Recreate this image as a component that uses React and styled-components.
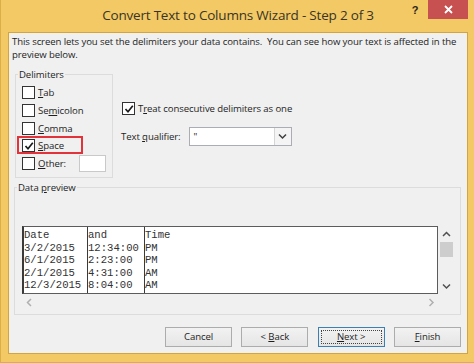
import styled, { createGlobalStyle } from "styled-components";

const GlobalStyle = createGlobalStyle`
  html, body { margin: 0; padding: 0; }
  body {
    width: 474px;
    height: 363px;
    overflow: hidden;
    font-family: "Open Sans", "Noto Sans", sans-serif;
    color: #1e1e1e;
  }
`;

const Frame = styled.div`
  box-sizing: border-box;
  width: 474px;
  height: 363px;
  background: #f2c964;
  border-left: 1px solid #dcad48;
  border-bottom: 1px solid #dcad48;
  padding: 0 6px 8px 7px;
  display: flex;
  flex-direction: column;
`;

const TitleBar = styled.div`
  height: 32px;
  flex: none;
  display: grid;
  grid-template-columns: 1fr auto 1fr;
  align-items: start;
`;

const Title = styled.div`
  grid-column: 2;
  font-size: 13.5px;
  letter-spacing: -0.2px;
  line-height: 31px;
  color: #3b3424;
  white-space: nowrap;
`;

const Controls = styled.div`
  grid-column: 3;
  justify-self: end;
  display: flex;
  align-items: flex-start;
`;

const HelpButton = styled.div`
  width: 14px;
  height: 20px;
  margin-right: 6px;
  display: flex;
  align-items: center;
  justify-content: center;
  font: bold 11px "Liberation Sans", sans-serif;
  color: #2b2618;
`;

const CloseButton = styled.div`
  width: 40px;
  height: 19px;
  background: #c75050;
  display: flex;
  align-items: center;
  justify-content: center;
`;

const Client = styled.div`
  flex: 1;
  background: #f0f0f0;
  border: 1px solid #d4a43e;
  padding: 2px 6px 0 3px;
  display: flex;
  flex-direction: column;
  font-size: 9.6px;
  letter-spacing: -0.1px;
`;

const Intro = styled.p`
  margin: 0;
  line-height: 13px;
  width: 445px;
`;

const TopRow = styled.div`
  display: flex;
  align-items: flex-start;
  margin: 7px 0 0 3px;
`;

const Group = styled.fieldset`
  margin: 0;
  box-sizing: border-box;
  border: 1px solid #dcdcdc;
  min-inline-size: 0;
  padding: ${(p) => p.$pad};
`;

const Legend = styled.legend`
  padding: 0 1px;
  margin-left: ${(p) => p.$shift}px;
  line-height: 13px;
`;

const Delimiters = styled(Group)`
  width: 98px;
  flex: none;
`;

const CheckRow = styled.div`
  position: relative;
  display: flex;
  align-items: center;
  gap: 3px;
  height: ${(p) => p.$h || 17.7}px;
`;

const Box = styled.span`
  box-sizing: border-box;
  width: 13px;
  height: 13px;
  flex: none;
  border: 1px solid #333;
  background: #fff;
  display: flex;
  align-items: center;
  justify-content: center;
`;

const Highlight = styled.span`
  position: absolute;
  left: -5px;
  top: -1px;
  width: 66px;
  height: 18px;
  box-sizing: border-box;
  border: 2px solid #e2333a;
`;

const Key = styled.span`
  text-decoration: underline;
  text-underline-offset: 1px;
`;

const SmallInput = styled.span`
  box-sizing: border-box;
  width: 28px;
  height: 17px;
  margin-left: 10px;
  background: #fff;
  border: 1px solid #c9c9c9;
`;

const Options = styled.div`
  margin-left: 9px;
  padding-top: 32px;
  display: flex;
  flex-direction: column;
  gap: 10px;
`;

const QualifierRow = styled.div`
  display: flex;
  align-items: center;
  gap: 8px;
  margin-left: -1px;
`;

const Combo = styled.div`
  box-sizing: border-box;
  width: 103px;
  height: 19px;
  background: #fff;
  border: 1px solid #abadb3;
  display: flex;
`;

const ComboValue = styled.span`
  flex: 1;
  padding: 1px 0 0 4px;
  line-height: 16px;
`;

const DropButton = styled.span`
  width: 16px;
  border-left: 1px solid #d5d5d5;
  background: #f4f4f4;
  display: flex;
  align-items: center;
  justify-content: center;
`;

const PreviewGroup = styled(Group)`
  margin: 3px 0 0 2px;
`;

const PreviewGap = styled.div`
  height: 32px;
`;

const Preview = styled.div`
  display: grid;
  grid-template-columns: 416px 17px;
  grid-template-rows: 68px 17px;
`;

const Sheet = styled.div`
  box-sizing: border-box;
  border: 1px solid #5c5c5c;
  border-left: 2px solid #3a3a3a;
  background: #fff;
  overflow: hidden;
  display: flex;
  font-family: "Liberation Mono", monospace;
  font-size: 10.6px;
  letter-spacing: 0;
  line-height: 12.5px;
  color: #333;
`;

const Column = styled.div`
  flex: ${(p) => (p.$w ? `0 0 ${p.$w}px` : "1")};
  box-sizing: border-box;
  padding-top: 2px;
  white-space: pre;
  border-left: ${(p) => (p.$first ? "none" : "1px solid #3a3a3a")};
`;

const VScroll = styled.div`
  display: flex;
  flex-direction: column;
  align-items: center;
  padding: 4px 0 3px;
  box-sizing: border-box;
`;

const Thumb = styled.span`
  width: 13px;
  height: 15px;
  margin: 3px 0 auto;
  background: #cdcdcd;
`;

const HScroll = styled.div`
  display: flex;
  align-items: center;
  justify-content: space-between;
  padding: 0 2px 0 3px;
`;

const ButtonRow = styled.div`
  display: flex;
  justify-content: flex-end;
  gap: 9.33px;
  margin-top: 12px;
`;

const Button = styled.div`
  box-sizing: border-box;
  width: 67px;
  height: 20px;
  padding: 2px;
  border: 1px solid ${(p) => (p.$default ? "#3c7fb1" : "#acacac")};
  background: linear-gradient(#f2f2f2, #e5e5e5);
  display: flex;
`;

const Face = styled.span`
  flex: 1;
  text-align: center;
  line-height: 12px;
  white-space: pre;
  border: 1px dotted ${(p) => (p.$focus ? "#444" : "transparent")};
`;

const Check = () => (
  <svg width="10" height="10" viewBox="0 0 10 10">
    <path d="M1.5 5 L4 7.8 L8.8 1.8" fill="none" stroke="#1a1a1a" strokeWidth="1.7" />
  </svg>
);

const Chevron = ({ dir, color }) => {
  const d = {
    up: "M1 6 L4.5 2.5 L8 6",
    down: "M1 2.5 L4.5 6 L8 2.5",
    left: "M6 1 L2.5 4.5 L6 8",
    right: "M2.5 1 L6 4.5 L2.5 8",
  }[dir];
  return (
    <svg width="9" height="9" viewBox="0 0 9 9">
      <path d={d} fill="none" stroke={color} strokeWidth="1.5" />
    </svg>
  );
};

const columns = [
  { w: 63, cells: ["Date", "3/2/2015", "6/1/2015", "2/1/2015", "12/3/2015"] },
  { w: 57, cells: ["and", "12:34:00", "2:23:00", "4:31:00", "8:04:00"] },
  { cells: ["Time", "PM", "PM", "AM", "AM"] },
];

const delimiters = [
  { pre: "", key: "T", post: "ab" },
  { pre: "Se", key: "m", post: "icolon" },
  { pre: "", key: "C", post: "omma" },
  { pre: "", key: "S", post: "pace", checked: true },
];

export default function App() {
  return (
    <>
      <GlobalStyle />
      <Frame>
        <TitleBar>
          <Title>Convert Text to Columns Wizard - Step 2 of 3</Title>
          <Controls>
            <HelpButton>?</HelpButton>
            <CloseButton>
              <svg width="9" height="9" viewBox="0 0 9 9">
                <path d="M1 1 L8 8 M8 1 L1 8" stroke="#fff" strokeWidth="1.8" />
              </svg>
            </CloseButton>
          </Controls>
        </TitleBar>
        <Client>
          <Intro>
            This screen lets you set the delimiters your data contains.&nbsp; You can see how your text is affected in the preview below.
          </Intro>
          <TopRow>
            <Delimiters $pad="3px 6px 5px">
              <Legend $shift={-4}>Delimiters</Legend>
              {delimiters.map((d) => (
                <CheckRow key={d.post}>
                  <Box>{d.checked && <Check />}</Box>
                  <span>
                    {d.pre}
                    <Key>{d.key}</Key>
                    {d.post}
                  </span>
                  {d.checked && <Highlight />}
                </CheckRow>
              ))}
              <CheckRow>
                <Box />
                <span>
                  <Key>O</Key>ther:
                </span>
                <SmallInput />
              </CheckRow>
            </Delimiters>
            <Options>
              <CheckRow $h={17}>
                <Box>
                  <Check />
                </Box>
                <span>
                  T<Key>r</Key>eat consecutive delimiters as one
                </span>
              </CheckRow>
              <QualifierRow>
                <span>
                  Text <Key>q</Key>ualifier:
                </span>
                <Combo>
                  <ComboValue>"</ComboValue>
                  <DropButton>
                    <Chevron dir="down" color="#404040" />
                  </DropButton>
                </Combo>
              </QualifierRow>
            </Options>
          </TopRow>
          <PreviewGroup $pad="0 5px 3px 7px">
            <Legend $shift={-5}>
              Data <Key>p</Key>review
            </Legend>
            <PreviewGap />
            <Preview>
              <Sheet>
                {columns.map((c, i) => (
                  <Column key={i} $w={c.w} $first={i === 0}>
                    {c.cells.join("\n")}
                  </Column>
                ))}
              </Sheet>
              <VScroll>
                <Chevron dir="up" color="#505050" />
                <Thumb />
                <Chevron dir="down" color="#505050" />
              </VScroll>
              <HScroll>
                <Chevron dir="left" color="#b0b0b0" />
                <Chevron dir="right" color="#b0b0b0" />
              </HScroll>
            </Preview>
          </PreviewGroup>
          <ButtonRow>
            <Button>
              <Face>Cancel</Face>
            </Button>
            <Button>
              <Face>
                {"< "}
                <Key>B</Key>ack
              </Face>
            </Button>
            <Button $default>
              <Face $focus>
                <Key>N</Key>
                {"ext >"}
              </Face>
            </Button>
            <Button>
              <Face>
                <Key>F</Key>inish
              </Face>
            </Button>
          </ButtonRow>
        </Client>
      </Frame>
    </>
  );
}
